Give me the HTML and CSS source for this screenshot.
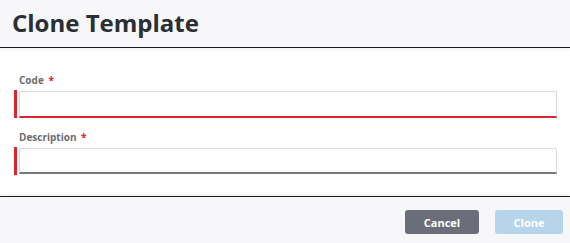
FILE: index.html
```html
<!DOCTYPE html>
<html lang="en">
<head>
  <meta charset="UTF-8" />
  <title>Clone Template</title>
  <link rel="stylesheet" href="styles.css">
</head>
<body>
  <div class="modal">
    <div class="modal-header">
      <h2>Clone Template</h2>
    </div>

    <div class="modal-body">
      <div class="field">
        <label for="code">Code <span class="req">*</span></label>
        <div class="input-row invalid">
          <input id="code" type="text" />
        </div>
      </div>

      <div class="field">
        <label for="desc">Description <span class="req">*</span></label>
        <div class="input-row required">
          <input id="desc" type="text" />
        </div>
      </div>
    </div>

    <div class="modal-footer">
      <button class="btn btn-cancel">Cancel</button>
      <button class="btn btn-clone" disabled>Clone</button>
    </div>
  </div>
</body>
</html>
```

FILE: styles.css
```css
:root {
  --bg-soft: #f7f7f9;
  --text: #2a2e35;
  --label: #6e6e6e;
  --danger: #dc2430;
  --line: #1c1c1c;
  --input-border: #d9d9d9;
}

html, body {
  margin: 0;
  height: 100%;
}

body {
  font-family: 'Open Sans', sans-serif;
  background: #ffffff;
}

.modal {
  display: flex;
  flex-direction: column;
  height: 100%;
}

.modal-header {
  height: 47px;
  background: var(--bg-soft);
  border-bottom: 1px solid var(--line);
  box-shadow: 0 2px 4px rgba(0,0,0,0.06);
  padding-left: 12px;
  display: flex;
  align-items: center;
  position: relative;
  z-index: 1;
}

.modal-header h2 {
  margin: 0;
  font-size: 24px;
  font-weight: 700;
  color: var(--text);
  line-height: 1;
  padding-bottom: 1px;
}

.modal-body {
  padding: 26px 13px 21px 14px;
}

.field + .field {
  margin-top: 13px;
}

.field label {
  display: block;
  font-size: 10px;
  line-height: 12px;
  font-weight: 700;
  color: var(--label);
  margin-bottom: 4px;
  padding-left: 5px;
}

.req {
  color: var(--danger);
  margin-left: 2px;
}

.input-row {
  display: flex;
  height: 28px;
  border-left: 3px solid var(--danger);
  padding-left: 2px;
}

.input-row input {
  flex: 1;
  margin: 1px 0 0 0;
  padding: 0 6px;
  height: 27px;
  box-sizing: border-box;
  border: 1px solid var(--input-border);
  border-bottom: 2px solid #7a7a7a;
  border-radius: 2px 2px 0 0;
  outline: none;
  font-family: inherit;
  font-size: 12px;
  background: #fff;
}

.input-row.invalid input {
  border-bottom-color: var(--danger);
}

.input-row.required input {
  height: 26px;
}

.modal-footer {
  flex: 1;
  background: var(--bg-soft);
  border-top: 1px solid var(--line);
  box-shadow: 0 -2px 4px rgba(0,0,0,0.06);
  display: flex;
  justify-content: flex-end;
  align-items: flex-start;
  gap: 16px;
  padding: 13px 7px 0 0;
}

.btn {
  height: 24px;
  border: none;
  border-radius: 3px;
  font-family: inherit;
  font-size: 11px;
  font-weight: 700;
  color: #ffffff;
  cursor: pointer;
}

.btn-cancel {
  width: 74px;
  background: #6b6e78;
}

.btn-clone {
  width: 68px;
  background: #b6d4ea;
  cursor: not-allowed;
}
```
